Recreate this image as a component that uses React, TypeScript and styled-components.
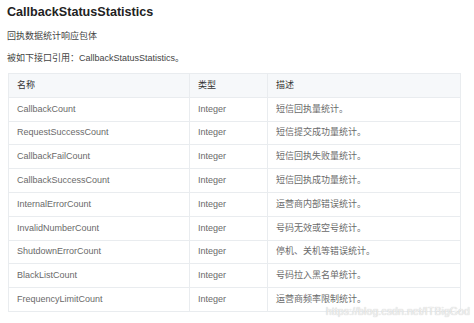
import styled, { createGlobalStyle } from 'styled-components';

const GlobalStyle = createGlobalStyle`
  html, body {
    margin: 0;
    padding: 0;
    background: #fff;
  }
  body {
    font-family: "Liberation Sans", Arial, "Noto Sans CJK SC", sans-serif;
  }
`;

const Page = styled.div`
  position: relative;
  width: 474px;
  height: 323px;
  overflow: hidden;
  padding: 4px 0 0 7px;
  box-sizing: border-box;
`;

const Title = styled.h3`
  margin: 0;
  font-size: 12.6px;
  line-height: 16px;
  font-weight: bold;
  color: #222;
`;

const Para = styled.p`
  margin: 0;
  font-size: 9px;
  line-height: 12px;
  color: #444;
`;

const Intro = styled(Para)`
  margin-top: 10px;
`;

const Ref = styled(Para)`
  margin-top: 10px;
`;

const Table = styled.table`
  margin-top: 9px;
  margin-left: 1px;
  width: 452px;
  border-collapse: collapse;
  table-layout: fixed;
  font-size: 9px;
  line-height: 11px;
`;

const Row = styled.tr`
  height: 23.8px;
`;

const Th = styled.th<{ $w: number }>`
  width: ${({ $w }) => $w}px;
  box-sizing: border-box;
  padding: 0 0 0 8px;
  text-align: left;
  font-weight: normal;
  color: #333;
  background: #f6f8fa;
  border: 1px solid #e9ecef;
`;

const Td = styled.td`
  padding: 0 0 0 8px;
  color: #6a6a6a;
  border: 1px solid #e9ecef;
  white-space: nowrap;
`;

const Watermark = styled.div`
  position: absolute;
  right: 4px;
  bottom: 6px;
  font-size: 10.5px;
  line-height: 12px;
  color: #f2f2f2;
  text-shadow: 0 0 1px #b8b8b8;
  letter-spacing: 0.1px;
`;

const rows: [string, string, string][] = [
  ['CallbackCount', 'Integer', '短信回执量统计。'],
  ['RequestSuccessCount', 'Integer', '短信提交成功量统计。'],
  ['CallbackFailCount', 'Integer', '短信回执失败量统计。'],
  ['CallbackSuccessCount', 'Integer', '短信回执成功量统计。'],
  ['InternalErrorCount', 'Integer', '运营商内部错误统计。'],
  ['InvalidNumberCount', 'Integer', '号码无效或空号统计。'],
  ['ShutdownErrorCount', 'Integer', '停机、关机等错误统计。'],
  ['BlackListCount', 'Integer', '号码拉入黑名单统计。'],
  ['FrequencyLimitCount', 'Integer', '运营商频率限制统计。'],
];

export default function App() {
  return (
    <Page>
      <GlobalStyle />
      <Title>CallbackStatusStatistics</Title>
      <Intro>回执数据统计响应包体</Intro>
      <Ref>被如下接口引用：CallbackStatusStatistics。</Ref>
      <Table>
        <thead>
          <Row>
            <Th $w={181}>名称</Th>
            <Th $w={78}>类型</Th>
            <Th $w={193}>描述</Th>
          </Row>
        </thead>
        <tbody>
          {rows.map(([name, type, desc]) => (
            <Row key={name}>
              <Td>{name}</Td>
              <Td>{type}</Td>
              <Td>{desc}</Td>
            </Row>
          ))}
        </tbody>
      </Table>
      <Watermark>https://blog.csdn.net/ITBigGod</Watermark>
    </Page>
  );
}
